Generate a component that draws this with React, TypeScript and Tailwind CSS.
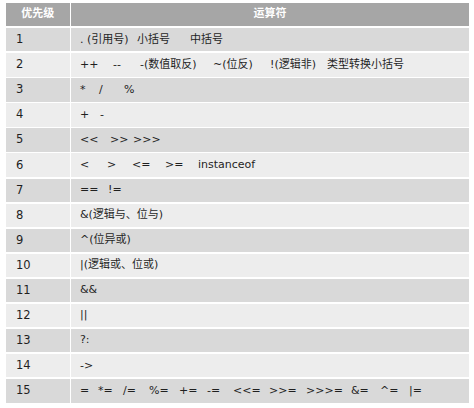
type Token = [string, number];

// each token: text and its x position in the page
const rows: { level: string; ops: Token[] }[] = [
  { level: "1", ops: [[". (引用号)", 80], ["小括号", 137], ["中括号", 190]] },
  {
    level: "2",
    ops: [
      ["++", 80],
      ["--", 113],
      ["-(数值取反)", 140],
      ["~(位反)", 213],
      ["!(逻辑非)", 270],
      ["类型转换小括号", 327],
    ],
  },
  { level: "3", ops: [["*", 80], ["/", 99], ["%", 124]] },
  { level: "4", ops: [["+", 80], ["-", 100]] },
  { level: "5", ops: [["<<", 80], [">>", 110], [">>>", 133]] },
  {
    level: "6",
    ops: [["<", 80], [">", 107], ["<=", 132], [">=", 165], ["instanceof", 198]],
  },
  { level: "7", ops: [["==", 80], ["!=", 108]] },
  { level: "8", ops: [["&(逻辑与、位与)", 80]] },
  { level: "9", ops: [["^(位异或)", 80]] },
  { level: "10", ops: [["|(逻辑或、位或)", 80]] },
  { level: "11", ops: [["&&", 80]] },
  { level: "12", ops: [["||", 80]] },
  { level: "13", ops: [["?:", 80]] },
  { level: "14", ops: [["->", 80]] },
  {
    level: "15",
    ops: [
      ["=", 80],
      ["*=", 98],
      ["/=", 123],
      ["%=", 149],
      ["+=", 179],
      ["-=", 207],
      ["<<=", 233],
      [">>=", 269],
      [">>>=", 306],
      ["&=", 351],
      ["^=", 380],
      ["|=", 409],
    ],
  },
];

const font = { fontFamily: '"DejaVu Sans", "Noto Sans CJK SC", sans-serif' };

function OpCell({ ops }: { ops: Token[] }) {
  return (
    <div className="flex flex-1 items-center pl-[9px] text-[11px] text-[#1f1f1f] whitespace-pre">
      {ops.map(([text, x], i) => {
        const next = ops[i + 1];
        return (
          <span key={i} style={next ? { width: next[1] - x } : undefined} className="shrink-0">
            {text}
          </span>
        );
      })}
    </div>
  );
}

export default function App() {
  return (
    <div className="w-[474px] h-[408px] bg-white pt-[3px] pl-[6px]" style={font}>
      <div className="w-[463px] flex flex-col gap-[1.7px]">
        <div className="flex gap-[1.5px] h-[23.4px] bg-white">
          <div className="w-[63.5px] bg-[#a6a6a6] flex items-center justify-center text-[11px] font-bold text-white">
            优先级
          </div>
          <div className="flex-1 bg-[#a6a6a6] flex items-center justify-center text-[11px] font-bold text-white">
            运算符
          </div>
        </div>
        {rows.map((r, i) => {
          const bg = i % 2 === 0 ? "bg-[#d9d9d9]" : "bg-[#ededed]";
          return (
            <div key={r.level} className="flex gap-[1.5px] h-[23.4px]">
              <div className={`w-[63.5px] ${bg} flex items-center pl-[10px] text-[11.5px] text-[#1f1f1f]`}>
                {r.level}
              </div>
              <div className={`flex-1 ${bg} flex`}>
                <OpCell ops={r.ops} />
              </div>
            </div>
          );
        })}
      </div>
    </div>
  );
}
